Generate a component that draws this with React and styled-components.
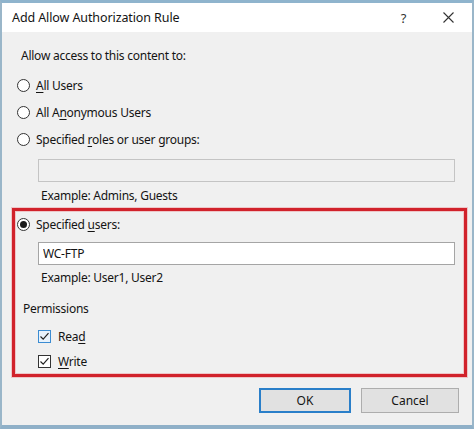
import React, { useState } from 'react';
import styled, { createGlobalStyle } from 'styled-components';

const GlobalStyle = createGlobalStyle`
  html, body {
    margin: 0;
    padding: 0;
    background: #ffffff;
  }
  * {
    box-sizing: border-box;
  }
`;

const Window = styled.div`
  width: 474px;
  height: 429px;
  display: flex;
  flex-direction: column;
  border-top: 3px solid #8fb4cd;
  border-left: 2px solid #9ab6c9;
  border-right: 2px solid #9ab6c9;
  border-bottom: 4px solid #8fb0c8;
  font-family: 'Noto Sans', 'Open Sans', sans-serif;
  font-size: 12px;
  letter-spacing: -0.25px;
  color: #141414;
  background: #f0f0f0;
`;

const TitleBar = styled.div`
  height: 29px;
  flex-shrink: 0;
  display: flex;
  align-items: center;
  padding-left: 10px;
  padding-right: 1px;
  background: #ffffff;
`;

const Title = styled.div`
  flex: 1;
  font-size: 12.5px;
  letter-spacing: -0.1px;
  color: #141414;
`;

const TitleButton = styled.div`
  width: 45px;
  height: 29px;
  display: flex;
  align-items: center;
  justify-content: center;
  color: #333;
  font-size: 13px;
`;

const Body = styled.div`
  flex: 1;
  display: flex;
  flex-direction: column;
  padding: 15px 15px 0 15px;
`;

const Caption = styled.div`
  line-height: 18px;
  height: 18px;
  padding-left: ${p => p.$indent || 4}px;
  margin-top: ${p => p.$top || 0}px;
  margin-bottom: ${p => p.$bottom || 0}px;
`;

const RadioRow = styled.label`
  height: 27px;
  display: flex;
  align-items: center;
  gap: 6px;
  cursor: default;
`;

const RadioCircle = styled.span`
  width: 13px;
  height: 13px;
  border-radius: 50%;
  border: 1px solid #333;
  background: #fff;
  display: flex;
  align-items: center;
  justify-content: center;
  flex-shrink: 0;

  &::after {
    content: '';
    width: 7px;
    height: 7px;
    border-radius: 50%;
    background: ${p => (p.$checked ? '#1a1a1a' : 'transparent')};
  }
`;

const Key = styled.span`
  text-decoration: underline;
  text-underline-offset: 2px;
`;

const TextInput = styled.input`
  height: 23px;
  margin: ${p => p.$top}px 2px 0 21px;
  border: 1px solid ${p => (p.disabled ? '#c4c4c4' : '#a5a5a5')};
  background: ${p => (p.disabled ? '#f0f0f0' : '#ffffff')};
  padding: 0 4px;
  font-family: inherit;
  font-size: 12px;
  letter-spacing: -0.25px;
  color: #141414;
  outline: none;
`;

const Hint = styled.div`
  line-height: 18px;
  height: 18px;
  margin: ${p => p.$top}px 0 0 24px;
`;

const Highlight = styled.div`
  margin: 3px -10px 0 -5px;
  border: 3px solid #d1222b;
  box-shadow: 0 0 0 1px rgba(235, 120, 125, 0.35), inset 0 0 0 1px rgba(235, 120, 125, 0.35);
  display: flex;
  flex-direction: column;
  padding: 0 7px 0 2px;
`;

const CheckRow = styled.label`
  height: 25px;
  display: flex;
  align-items: center;
  gap: 7px;
  padding-left: 21px;
`;

const CheckBox = styled.span`
  width: 13px;
  height: 13px;
  border: 1px solid ${p => (p.$hover ? '#3b8cd2' : '#333')};
  background: ${p => (p.$hover ? '#e8f2fb' : '#fff')};
  display: flex;
  align-items: center;
  justify-content: center;
  flex-shrink: 0;
`;

const ButtonBar = styled.div`
  display: flex;
  justify-content: flex-end;
  gap: 10px;
  margin: 11px -2px 0 0;
`;

const Button = styled.button`
  height: 25px;
  width: ${p => p.$w}px;
  background: #e1e1e1;
  border: ${p => (p.$default ? '2px solid #2a7fc9' : '1px solid #adadad')};
  font-family: inherit;
  font-size: 12px;
  color: #141414;
  padding: 0;
`;

const Check = () => (
  <svg width="11" height="11" viewBox="0 0 11 11">
    <path d="M1.5 5.5 L4.2 8.2 L9.5 2.2" fill="none" stroke="#222" strokeWidth="1.2" />
  </svg>
);

export default function App() {
  const [choice, setChoice] = useState('users');

  return (
    <>
      <GlobalStyle />
      <Window>
        <TitleBar>
          <Title>Add Allow Authorization Rule</Title>
          <TitleButton>?</TitleButton>
          <TitleButton>
            <svg width="11" height="11" viewBox="0 0 11 11">
              <path d="M0.5 0.5 L10.5 10.5 M10.5 0.5 L0.5 10.5" stroke="#333" strokeWidth="1.1" />
            </svg>
          </TitleButton>
        </TitleBar>
        <Body>
          <Caption $bottom={7}>Allow access to this content to:</Caption>
          <RadioRow onClick={() => setChoice('all')}>
            <RadioCircle $checked={choice === 'all'} />
            <span><Key>A</Key>ll Users</span>
          </RadioRow>
          <RadioRow onClick={() => setChoice('anon')}>
            <RadioCircle $checked={choice === 'anon'} />
            <span>All A<Key>n</Key>onymous Users</span>
          </RadioRow>
          <RadioRow onClick={() => setChoice('roles')}>
            <RadioCircle $checked={choice === 'roles'} />
            <span>Specified <Key>r</Key>oles or user groups:</span>
          </RadioRow>
          <TextInput $top={6} disabled={choice !== 'roles'} defaultValue="" />
          <Hint $top={5}>Example: Admins, Guests</Hint>
          <Highlight>
            <RadioRow onClick={() => setChoice('users')}>
              <RadioCircle $checked={choice === 'users'} />
              <span>Specified <Key>u</Key>sers:</span>
            </RadioRow>
            <TextInput $top={4} defaultValue="WC-FTP" disabled={choice !== 'users'} />
            <Hint $top={4}>Example: User1, User2</Hint>
            <Caption $indent={6} $top={13} $bottom={6}>Permissions</Caption>
            <CheckRow>
              <CheckBox $hover><Check /></CheckBox>
              <span>Rea<Key>d</Key></span>
            </CheckRow>
            <CheckRow>
              <CheckBox><Check /></CheckBox>
              <span><Key>W</Key>rite</span>
            </CheckRow>
          </Highlight>
          <ButtonBar>
            <Button $default $w={92}>OK</Button>
            <Button $w={98}>Cancel</Button>
          </ButtonBar>
        </Body>
      </Window>
    </>
  );
}
